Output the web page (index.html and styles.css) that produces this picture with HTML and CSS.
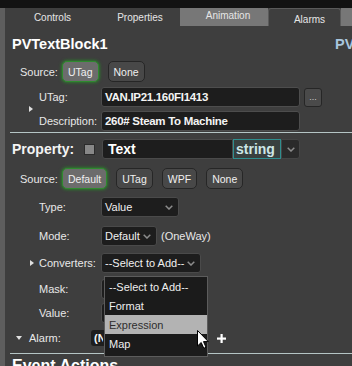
FILE: index.html
```html
<!DOCTYPE html>
<html lang="en">
<head>
  <meta charset="UTF-8" />
  <title>PVTextBlock1 Properties</title>
  <link rel="stylesheet" href="styles.css">
</head>
<body>

  <div class="topbar"></div>

  <div class="frame">
    <!-- tab strip -->
    <div class="tabs">
      <div class="tab tab-controls">Controls</div>
      <div class="tab tab-props">Properties</div>
      <div class="tab tab-anim">Animation</div>
      <div class="tab tab-alarms">Alarms</div>
      <div class="tab-fill"></div>
    </div>

    <div class="panel">
      <div class="title-row">
        <span class="title">PVTextBlock1</span>
        <span class="ghost">PVTextBlock1</span>
      </div>

      <div class="src-row">
        <span class="src-lbl">Source:</span>
        <div class="btn on">UTag</div>
        <div class="btn">None</div>
      </div>

      <div class="group">
        <div class="marker"><span class="tri-right"></span></div>
        <div class="group-rows">
          <div class="field-row">
            <span class="lbl">UTag:</span>
            <div class="input">VAN.IP21.160FI1413</div>
            <div class="dots">...</div>
          </div>
          <div class="field-row">
            <span class="lbl">Description:</span>
            <div class="input">260# Steam To Machine</div>
          </div>
        </div>
      </div>

      <div class="rule"></div>

      <div class="prop-row">
        <span class="prop-lbl">Property:</span>
        <span class="check"></span>
        <div class="prop-input">Text</div>
        <div class="type-box">string</div>
        <div class="type-drop">
          <svg width="8" height="5" viewBox="0 0 8 5"><polyline points="0.7,0.7 4,4 7.3,0.7" fill="none" stroke="#8c8c8c" stroke-width="1.5"/></svg>
        </div>
      </div>

      <div class="src-row src-row-2">
        <span class="src-lbl">Source:</span>
        <div class="btn on">Default</div>
        <div class="btn">UTag</div>
        <div class="btn">WPF</div>
        <div class="btn">None</div>
      </div>

      <div class="sub-row row-type">
        <span class="lbl">Type:</span>
        <div class="select sel-type">Value
          <svg width="8" height="5" viewBox="0 0 8 5"><polyline points="0.7,0.7 4,4 7.3,0.7" fill="none" stroke="#8c8c8c" stroke-width="1.5"/></svg>
        </div>
      </div>

      <div class="sub-row row-mode">
        <span class="lbl">Mode:</span>
        <div class="select sel-mode">Default
          <svg width="8" height="5" viewBox="0 0 8 5"><polyline points="0.7,0.7 4,4 7.3,0.7" fill="none" stroke="#8c8c8c" stroke-width="1.5"/></svg>
        </div>
        <span class="note">(OneWay)</span>
      </div>

      <div class="sub-row row-conv">
        <span class="tri-right conv-tri"></span>
        <span class="lbl">Converters:</span>
        <div class="select sel-conv">--Select to Add--
          <svg width="8" height="5" viewBox="0 0 8 5"><polyline points="0.7,0.7 4,4 7.3,0.7" fill="none" stroke="#8c8c8c" stroke-width="1.5"/></svg>
        </div>
      </div>

      <div class="sub-row row-mask">
        <span class="lbl">Mask:</span>
        <div class="input short"></div>
      </div>

      <div class="sub-row row-value">
        <span class="lbl">Value:</span>
        <div class="input short"></div>
      </div>

      <div class="alarm-row">
        <span class="tri-down"></span>
        <span class="lbl">Alarm:</span>
        <div class="alarm-sel"><span class="alarm-val">(None)</span></div>
        <svg class="plus" width="9" height="9" viewBox="0 0 9 9"><rect x="3.5" y="0" width="2.2" height="9" fill="#fff"/><rect x="0" y="3.5" width="9" height="2.2" fill="#fff"/></svg>
      </div>

      <div class="rule rule-2"></div>

      <div class="section">Event Actions</div>
    </div>
  </div>

  <!-- open converter dropdown -->
  <div class="popup">
    <div class="opt">--Select to Add--</div>
    <div class="opt">Format</div>
    <div class="opt hover">Expression</div>
    <div class="opt">Map</div>
  </div>

  <svg class="cursor" width="12" height="19" viewBox="0 0 12 19">
    <path d="M0.5,0.5 L0.5,16 L4.2,12.5 L6.8,18.3 L9,17.3 L6.5,11.6 L11.3,11.6 Z" fill="#fff" stroke="#000" stroke-width="1"/>
  </svg>

</body>
</html>
```

FILE: styles.css
```css
body {
  margin: 0;
  width: 352px;
  height: 366px;
  overflow: hidden;
  position: relative;
  background: #3e3e3e;
  font-family: 'Liberation Sans', Arial, sans-serif;
  font-size: 11px;
  color: #e8e8e8;
}

.topbar {
  height: 8px;
  background: #121212;
}

.frame {
  border-left: 5px solid #5e5e5e;
}

/* tabs */
.tabs {
  display: flex;
  height: 18px;
  background: #3e3e3e;
  font-size: 10px;
  color: #e6e6e6;
}

.tab {
  display: flex;
  align-items: center;
  justify-content: center;
  padding-top: 1px;
  box-sizing: border-box;
}

.tab-controls { width: 95px; }
.tab-props { width: 80px; }

.tab-anim {
  width: 88px;
  background: #777;
  align-items: flex-start;
  padding-top: 2px;
  padding-left: 8px;
}

.tab-alarms {
  width: 73px;
  background: #3e3e3e;
  border: 1px solid #5a5a5a;
  border-bottom: none;
  border-radius: 3px 3px 0 0;
  padding-top: 3px;
  padding-left: 10px;
}

.tab-fill {
  flex: 1;
  background: #777;
}

/* panel */
.panel {
  padding: 9px 0 0 7px;
}

.title-row {
  display: flex;
  align-items: center;
  height: 17px;
  white-space: nowrap;
  overflow: hidden;
}

.title {
  font-size: 14.5px;
  font-weight: bold;
  color: #fff;
}

.ghost {
  margin-left: auto;
  width: 17px;
  flex-shrink: 0;
  overflow: hidden;
  font-size: 14.5px;
  font-weight: bold;
  color: #a9c6de;
}

.src-row {
  display: flex;
  align-items: center;
  gap: 9px;
  height: 21px;
  margin-top: 9px;
  padding-left: 8px;
}

.src-lbl {
  width: 42px;
  margin-right: -9px;
}

.btn {
  display: flex;
  align-items: center;
  height: 21px;
  box-sizing: border-box;
  padding: 0 5px;
  border: 1px solid #262626;
  border-radius: 5px;
  background: #484848;
  color: #f0f0f0;
  font-size: 10.5px;
}

.btn.on {
  background: #6c6c6c;
  border-color: #2f8a2f;
  box-shadow: 0 0 3px 1px rgba(40, 140, 40, 0.75);
}

.src-row-2 {
  margin-top: 9px;
}

.group {
  display: flex;
  align-items: center;
  margin-top: 5px;
}

.marker {
  width: 27px;
  padding-left: 17px;
  box-sizing: border-box;
  display: flex;
}

.group-rows {
  display: flex;
  flex-direction: column;
  gap: 4px;
}

.field-row {
  display: flex;
  align-items: center;
  height: 20px;
}

.lbl {
  width: 62px;
  flex-shrink: 0;
}

.input {
  display: flex;
  align-items: center;
  width: 199px;
  height: 20px;
  box-sizing: border-box;
  padding-left: 3px;
  background: #1d1d1d;
  border: 1px solid #4d4d4d;
  border-radius: 3px;
  font-size: 11.5px;
  font-weight: bold;
  letter-spacing: -0.3px;
  color: #f4f4f4;
  white-space: nowrap;
}

.input.short {
  width: 107px;
}

.dots {
  display: flex;
  align-items: center;
  justify-content: center;
  margin-left: 4px;
  width: 18px;
  height: 19px;
  box-sizing: border-box;
  background: #4a4a4a;
  border: 1px solid #262626;
  border-radius: 3px;
  color: #cfcfcf;
  font-size: 9px;
}

.tri-right {
  width: 0;
  height: 0;
  border-left: 4px solid #e0e0e0;
  border-top: 3.5px solid transparent;
  border-bottom: 3.5px solid transparent;
}

.tri-down {
  width: 0;
  height: 0;
  border-top: 4px solid #e0e0e0;
  border-left: 3.5px solid transparent;
  border-right: 3.5px solid transparent;
  margin-right: 7px;
}

.rule {
  height: 1px;
  margin: 1px 0 0 -2px;
  background: #b5c5c5;
}

/* property row */
.prop-row {
  display: flex;
  align-items: center;
  height: 20px;
  margin-top: 6px;
}

.prop-lbl {
  width: 72px;
  font-size: 14px;
  font-weight: bold;
  color: #f4f4f4;
}

.check {
  width: 11px;
  height: 11px;
  box-sizing: border-box;
  margin-right: 7px;
  background: #888;
  border: 1px solid #2c2c2c;
}

.prop-input {
  display: flex;
  align-items: center;
  width: 131px;
  height: 20px;
  box-sizing: border-box;
  padding-left: 5px;
  background: #1d1d1d;
  border: 1px solid #4a4a4a;
  border-radius: 3px 0 0 3px;
  font-size: 14px;
  font-weight: bold;
  color: #fff;
}

.type-box {
  display: flex;
  align-items: center;
  width: 48px;
  height: 20px;
  box-sizing: border-box;
  padding-left: 2px;
  background: #38403f;
  border: 1px solid #2f8e8e;
  font-size: 14px;
  font-weight: bold;
  color: #cde6e6;
}

.type-drop {
  display: flex;
  align-items: center;
  justify-content: center;
  width: 19px;
  height: 20px;
  box-sizing: border-box;
  background: #2a2a2a;
  border: 1px solid #454545;
  border-radius: 0 3px 3px 0;
}

/* lower rows */
.sub-row {
  display: flex;
  align-items: center;
  height: 20px;
  padding-left: 27px;
}

.row-type { margin-top: 8px; }
.row-mode { margin-top: 9px; }
.row-conv { margin-top: 7px; padding-left: 18px; }
.row-mask { margin-top: 6px; }
.row-value { margin-top: 4px; }

.conv-tri {
  margin-right: 5px;
}

.select {
  display: flex;
  align-items: center;
  justify-content: space-between;
  height: 20px;
  box-sizing: border-box;
  padding: 0 5px 0 3px;
  background: #1d1d1d;
  border: 1px solid #4a4a4a;
  border-radius: 3px;
  color: #f0f0f0;
  white-space: nowrap;
}

.sel-type { width: 78px; }
.sel-mode { width: 56px; }
.sel-conv { width: 100px; }

.note {
  margin-left: 4px;
}

.alarm-row {
  display: flex;
  align-items: center;
  height: 20px;
  margin-top: 5px;
  padding-left: 4px;
}

.alarm-sel {
  display: flex;
  align-items: center;
  width: 112px;
  height: 16px;
  box-sizing: border-box;
  padding-left: 3px;
  background: #1d1d1d;
  border-radius: 3px;
  font-weight: bold;
  color: #f4f4f4;
}

/* only the part left of the open list shows */
.alarm-val {
  width: 9px;
  overflow: hidden;
  white-space: nowrap;
}

.plus {
  margin-left: 14px;
}

.rule-2 {
  margin-top: 5px;
}

.section {
  margin-top: 3px;
  font-size: 16px;
  font-weight: bold;
  color: #fff;
  line-height: 18px;
}

/* dropdown list */
.popup {
  position: absolute;
  left: 104px;
  top: 276px;
  width: 104px;
  height: 81px;
  box-sizing: border-box;
  background: #1b1b1b;
  border: 1px solid #5c5c5c;
}

.opt {
  height: 19px;
  display: flex;
  align-items: center;
  padding-left: 4px;
  color: #eee;
}

.opt.hover {
  background: #b3b3b3;
  color: #2e2e2e;
}

.cursor {
  position: absolute;
  left: 197px;
  top: 330px;
}
```
